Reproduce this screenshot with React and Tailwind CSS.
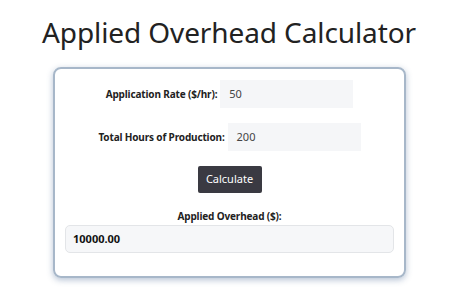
import React from "react";

function Row({ label, value }) {
  return (
    <div className="flex items-center justify-center gap-[3px]">
      <label className="text-[10px] font-bold tracking-[-0.15px] text-[#222]">{label}</label>
      <div className="w-[133px] h-[28px] bg-[#f5f6f8] flex items-center px-[9px] text-[11px] text-[#444]">
        {value}
      </div>
    </div>
  );
}

export default function App() {
  return (
    <div
      className="w-[474px] h-[295px] bg-white overflow-hidden"
      style={{ fontFamily: '"Noto Sans", "Open Sans", sans-serif' }}
    >
      <h1 className="text-center text-[28px] leading-[34px] pt-[15px] pr-[16px] text-[#222] font-normal tracking-[-0.1px]">
        Applied Overhead Calculator
      </h1>
      <div className="ml-[53px] mt-[18px] w-[353px] border-2 border-[#a7b7c9] rounded-[8px] shadow-[0_2px_6px_rgba(90,120,160,0.45)] pt-[11px] pb-[23px] px-[10px] flex flex-col">
        <div className="flex flex-col gap-[15px]">
          <Row label="Application Rate ($/hr):" value="50" />
          <Row label="Total Hours of Production:" value="200" />
        </div>
        <div className="flex justify-center mt-[15px]">
          <button className="w-[64px] h-[27px] bg-[#3a3a42] text-white text-[11px] rounded-[2px]">
            Calculate
          </button>
        </div>
        <div className="text-center text-[10px] font-bold tracking-[-0.15px] text-[#222] mt-[16px] leading-[15px]">
          Applied Overhead ($):
        </div>
        <div className="h-[28px] border border-[#e3e5e8] bg-[#f6f7f9] rounded-[5px] flex items-center px-[7px] text-[11px] font-bold text-[#111] mt-[1px]">
          10000.00
        </div>
      </div>
    </div>
  );
}
